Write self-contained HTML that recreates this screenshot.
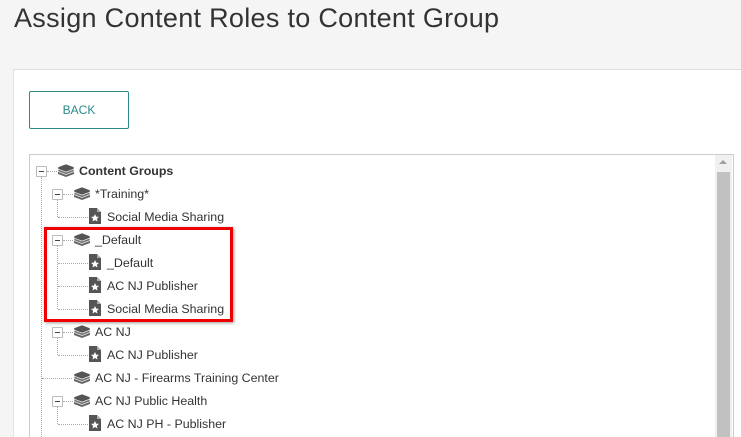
<!DOCTYPE html>
<html><head><meta charset="utf-8"><style>
html,body{margin:0;width:741px;height:437px;overflow:hidden}
body{background:#f5f5f5;font-family:"Liberation Sans",sans-serif;position:relative}
h1{position:absolute;left:14px;top:0;margin:0;font:27px "Liberation Sans",sans-serif;color:#333;line-height:36px;letter-spacing:0.3px}
.panel{position:absolute;left:13px;top:69px;width:740px;height:380px;background:#fff;border-top:1px solid #ddd;border-left:1px solid #e3e3e3}
.back{position:absolute;left:29px;top:91px;width:98px;height:36px;border:1px solid #2a8a8a;border-radius:2px;color:#2a8a8a;font:12px "Liberation Sans",sans-serif;text-align:center;line-height:36px}
.tree{position:absolute;left:29px;top:154px;width:703px;height:300px;border:1px solid #ccc;background:#fff}
.sb{position:absolute;left:715px;top:155px;width:17px;height:290px;background:#f0f0f0}
.thumb{position:absolute;left:717px;top:172px;width:13px;height:270px;background:#c1c1c1}
.arr{position:absolute;left:719px;top:160px;width:0;height:0;border-left:4px solid transparent;border-right:4px solid transparent;border-bottom:4px solid #a0a0a0}
.row{position:absolute;font-size:12.4px;color:#333;line-height:16px;white-space:nowrap}
.tg{position:absolute;width:9px;height:9px;border:1px solid #bbb;background:#fff;border-radius:1px}
.tg:after{content:"";position:absolute;left:2px;top:4px;width:5px;height:1px;background:#444}
.vl{position:absolute;border-left:1px dotted #aaa;width:0}
.hl{position:absolute;border-top:1px dotted #aaa;height:0}
.red{position:absolute;left:44px;top:227px;width:183px;height:89px;border:3px solid #e00;box-shadow:1px 1px 3px rgba(0,0,0,.4)}
</style></head><body>
<h1>Assign Content Roles to Content Group</h1>
<div class="panel"></div>
<div class="back">BACK</div>
<div class="tree"></div>
<div class="sb"></div><div class="thumb"></div><div class="arr"></div>
<svg width="741" height="437" style="position:absolute;left:0;top:0">
<defs>
<g id="st"><path d="M0 9 L8 6 L16 9 L16 11 L8 14 L0 11Z" fill="#666"/><path d="M0 6.5 L8 3.5 L16 6.5 L16 8.5 L8 11.5 L0 8.5Z" fill="#777" stroke="#fff" stroke-width=".6"/><path d="M0 4 L8 1 L16 4 L16 6 L8 9 L0 6Z" fill="#555" stroke="#fff" stroke-width=".6"/></g>
<g id="dc"><path d="M0 0 H8 L12 4 V16 H0Z" fill="#555"/><path d="M8 0 V4 H12Z" fill="#aaa"/><path d="M6 6 L7.2 8.6 L10 8.9 L7.9 10.7 L8.5 13.5 L6 12 L3.5 13.5 L4.1 10.7 L2 8.9 L4.8 8.6Z" fill="#fff"/></g>
</defs>
<use href="#st" x="58" y="163"/>
<use href="#st" x="74" y="186"/>
<use href="#dc" x="89" y="208"/>
<use href="#st" x="74" y="232"/>
<use href="#dc" x="89" y="254"/>
<use href="#dc" x="89" y="277"/>
<use href="#dc" x="89" y="300"/>
<use href="#st" x="74" y="324"/>
<use href="#dc" x="89" y="346"/>
<use href="#st" x="74" y="370"/>
<use href="#st" x="74" y="393"/>
<use href="#dc" x="89" y="415"/>
</svg>
<div class="vl" style="left:41px;top:177px;height:260px"></div>
<div class="vl" style="left:57px;top:200px;height:17px"></div>
<div class="vl" style="left:57px;top:246px;height:63px"></div>
<div class="vl" style="left:57px;top:338px;height:17px"></div>
<div class="vl" style="left:57px;top:407px;height:17px"></div>
<div class="hl" style="left:47px;top:171px;width:10px"></div>
<div class="hl" style="left:63px;top:194px;width:10px"></div>
<div class="hl" style="left:58px;top:217px;width:30px"></div>
<div class="hl" style="left:63px;top:240px;width:10px"></div>
<div class="hl" style="left:58px;top:263px;width:30px"></div>
<div class="hl" style="left:58px;top:286px;width:30px"></div>
<div class="hl" style="left:58px;top:309px;width:30px"></div>
<div class="hl" style="left:63px;top:332px;width:10px"></div>
<div class="hl" style="left:58px;top:355px;width:30px"></div>
<div class="hl" style="left:42px;top:378px;width:30px"></div>
<div class="hl" style="left:63px;top:401px;width:10px"></div>
<div class="hl" style="left:58px;top:424px;width:30px"></div>
<div class="tg" style="left:36px;top:166px"></div>
<div class="tg" style="left:52px;top:189px"></div>
<div class="tg" style="left:52px;top:235px"></div>
<div class="tg" style="left:52px;top:327px"></div>
<div class="tg" style="left:52px;top:396px"></div>
<div class="row" style="left:79px;top:163px;font-weight:bold">Content Groups</div>
<div class="row" style="left:95px;top:186px">*Training*</div>
<div class="row" style="left:107px;top:209px">Social Media Sharing</div>
<div class="row" style="left:95px;top:232px">_Default</div>
<div class="row" style="left:107px;top:255px">_Default</div>
<div class="row" style="left:107px;top:278px">AC NJ Publisher</div>
<div class="row" style="left:107px;top:301px">Social Media Sharing</div>
<div class="row" style="left:95px;top:324px">AC NJ</div>
<div class="row" style="left:107px;top:347px">AC NJ Publisher</div>
<div class="row" style="left:95px;top:370px">AC NJ - Firearms Training Center</div>
<div class="row" style="left:95px;top:393px">AC NJ Public Health</div>
<div class="row" style="left:107px;top:416px">AC NJ PH - Publisher</div>
<div class="red"></div>
</body></html>
